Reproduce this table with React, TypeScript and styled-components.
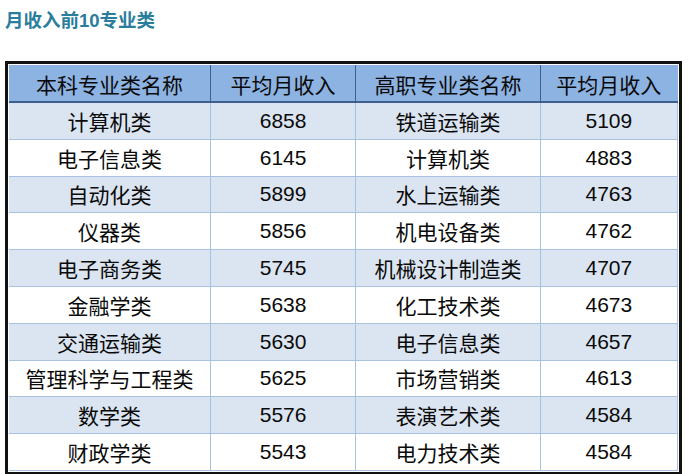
import React from "react";
import styled, { createGlobalStyle } from "styled-components";

const Global = createGlobalStyle`
  html, body { margin: 0; padding: 0; background: #ffffff; }
  body { font-family: "Liberation Sans", "Noto Sans CJK SC", sans-serif; }
`;

const Page = styled.div`
  width: 689px;
  height: 474px;
  overflow: hidden;
  padding: 9px 0 0 5px;
  box-sizing: border-box;
`;

const Title = styled.h1`
  margin: 0;
  font-size: 18.5px;
  line-height: 24px;
  font-weight: 700;
  color: #2a7d9c;
  font-family: "Liberation Sans", "Noto Sans CJK SC", sans-serif;
`;

const Frame = styled.div`
  margin-top: 28px;
  width: 677px;
  box-sizing: border-box;
  border: 3px solid #111;
  padding: 1px;
  background: #fff;
`;

const Table = styled.table`
  width: 100%;
  border-collapse: collapse;
  table-layout: fixed;
  font-family: "Liberation Sans", "Noto Sans CJK SC", sans-serif;
  font-size: 21px;
  color: #0a0a0a;
`;

const HeadCell = styled.th<{ $last?: boolean }>`
  height: 35px;
  padding: 0;
  background: #8db3e2;
  font-weight: 400;
  text-align: center;
  border-bottom: 2px solid #3c5f8f;
  border-right: 1px solid ${(p) => (p.$last ? "#8db3e2" : "#3c5f8f")};
  border-top: 1px solid #8db3e2;
`;

const Row = styled.tr<{ $striped: boolean }>`
  background: ${(p) => (p.$striped ? "#dbe5f1" : "#ffffff")};
`;

const Cell = styled.td`
  height: 35.8px;
  padding: 0;
  text-align: center;
  white-space: nowrap;
  border-bottom: 1px solid #a9c1e0;
  border-right: 1px solid #a9c1e0;
`;

const cols = [201, 145, 184, 137];

const data: [string, string, string, string][] = [
  ["计算机类", "6858", "铁道运输类", "5109"],
  ["电子信息类", "6145", "计算机类", "4883"],
  ["自动化类", "5899", "水上运输类", "4763"],
  ["仪器类", "5856", "机电设备类", "4762"],
  ["电子商务类", "5745", "机械设计制造类", "4707"],
  ["金融学类", "5638", "化工技术类", "4673"],
  ["交通运输类", "5630", "电子信息类", "4657"],
  ["管理科学与工程类", "5625", "市场营销类", "4613"],
  ["数学类", "5576", "表演艺术类", "4584"],
  ["财政学类", "5543", "电力技术类", "4584"],
];

const headers = ["本科专业类名称", "平均月收入", "高职专业类名称", "平均月收入"];

export default function App() {
  return (
    <Page>
      <Global />
      <Title>月收入前10专业类</Title>
      <Frame>
        <Table>
          <colgroup>
            {cols.map((w, i) => (
              <col key={i} style={{ width: w }} />
            ))}
          </colgroup>
          <thead>
            <tr>
              {headers.map((h, i) => (
                <HeadCell key={i} $last={i === 3}>
                  {h}
                </HeadCell>
              ))}
            </tr>
          </thead>
          <tbody>
            {data.map((r, i) => (
              <Row key={i} $striped={i % 2 === 0}>
                {r.map((c, j) => (
                  <Cell key={j}>{c}</Cell>
                ))}
              </Row>
            ))}
          </tbody>
        </Table>
      </Frame>
    </Page>
  );
}
